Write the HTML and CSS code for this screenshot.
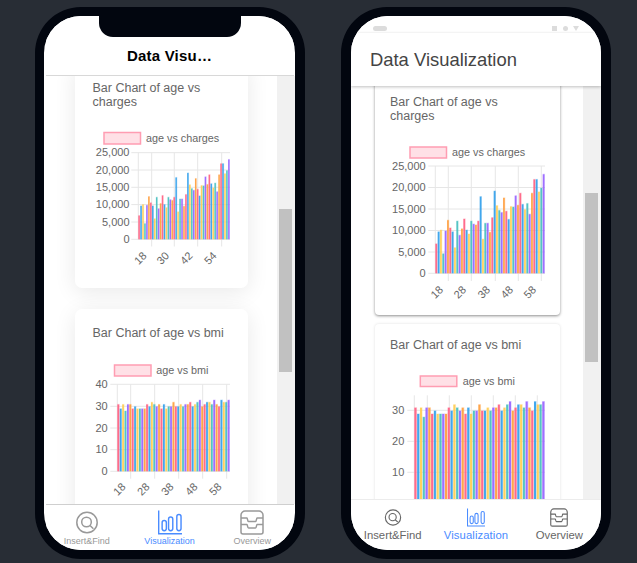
FILE: index.html
```html
<!DOCTYPE html>
<html lang="en">
<head>
<meta charset="utf-8">
<title>Data Visualization</title>
<link rel="stylesheet" href="styles.css">
</head>
<body>
<svg class="defs" width="0" height="0" aria-hidden="true">
  <symbol id="i-find" viewBox="0 0 24 24">
    <circle cx="12" cy="12" r="10.2"/>
    <circle cx="11.5" cy="11.5" r="4.8"/>
    <path d="M15 15l3.4 3.2"/>
  </symbol>
  <symbol id="i-bars" viewBox="0 0 25 25">
    <path d="M.7 0v24.3H25"/>
    <rect x="4.3" y="10.5" width="4.4" height="10.5" rx="2.2"/>
    <rect x="11" y="6.8" width="4.4" height="14.2" rx="2.2"/>
    <rect x="19.6" y="4.2" width="4.4" height="16.8" rx="2.2"/>
  </symbol>
  <symbol id="i-box" viewBox="0 0 24 25">
    <path d="M5 1h14c2 0 4 2 4 4v17c0 1.2-.8 2-2 2H3c-1.2 0-2-.8-2-2V5c0-2 2-4 4-4z"/>
    <path d="M1 8h6c.5 0 .5 3.500 1.500 3.500h7c1 0 1-3.500 1.500-3.500h6"/>
    <path d="M1 14.500h6c.5 0 .5 3.500 1.500 3.500h7c1 0 1-3.500 1.500-3.500h6"/>
  </symbol>
</svg>

<section class="phone phone-ios">
  <div class="screen">
    <div class="notch"></div>
    <header class="bar"><h1 class="bar-title">Data Visualization</h1></header>
    <div class="body">
      <div class="list">
        <article class="card">
          <h2 class="card-title">Bar Chart of age vs charges</h2>
          <svg class="chart chart-a" data-chart="ios-charges"></svg>
        </article>
        <article class="card">
          <h2 class="card-title">Bar Chart of age vs bmi</h2>
          <svg class="chart chart-b" data-chart="ios-bmi"></svg>
        </article>
      </div>
      <div class="track"><div class="thumb"></div></div>
    </div>
    <nav class="tabs">
      <a class="tab"><svg class="icon icon-find"><use href="#i-find"/></svg><span>Insert&amp;Find</span></a>
      <a class="tab is-active"><svg class="icon icon-bars"><use href="#i-bars"/></svg><span>Visualization</span></a>
      <a class="tab"><svg class="icon icon-box"><use href="#i-box"/></svg><span>Overview</span></a>
    </nav>
  </div>
</section>

<section class="phone phone-md">
  <div class="screen">
    <div class="status">
      <span class="status-pill"></span>
      <span class="status-icons"><i class="st-square"></i><i class="st-dot"></i><i class="st-tri"></i></span>
    </div>
    <header class="bar"><h1 class="bar-title">Data Visualization</h1></header>
    <div class="body">
      <div class="list">
        <article class="card">
          <h2 class="card-title">Bar Chart of age vs charges</h2>
          <svg class="chart chart-a" data-chart="md-charges"></svg>
        </article>
        <article class="card">
          <h2 class="card-title">Bar Chart of age vs bmi</h2>
          <svg class="chart chart-b" data-chart="md-bmi"></svg>
        </article>
      </div>
      <div class="track"><div class="thumb"></div></div>
    </div>
    <nav class="tabs">
      <a class="tab"><svg class="icon icon-find"><use href="#i-find"/></svg><span>Insert&amp;Find</span></a>
      <a class="tab is-active"><svg class="icon icon-bars"><use href="#i-bars"/></svg><span>Visualization</span></a>
      <a class="tab"><svg class="icon icon-box"><use href="#i-box"/></svg><span>Overview</span></a>
    </nav>
  </div>
</section>
<script src="charts.js"></script>
</body>
</html>
```
FILE: styles.css
```css
* { box-sizing: border-box; }
html, body { margin: 0; height: 100%; }
body {
  background: #282d35;
  display: flex;
  align-items: flex-start;
  gap: 36px;
  padding: 7px 0 0 35px;
  font-family: "Liberation Sans", Arial, sans-serif;
  overflow: hidden;
}
.defs { position: absolute; }

.phone {
  width: 270px;
  height: 552px;
  flex: none;
  border: 9px solid #02060f;
  border-radius: 46px;
  background: #02060f;
}
.phone-ios { border-width: 9px 10px 9px 9.500px; }
.phone-md { border-width: 9px 10px; }
.screen {
  position: relative;
  height: 100%;
  display: flex;
  flex-direction: column;
  background: #fff;
  border-radius: 37px;
  overflow: hidden;
}
.notch {
  position: absolute;
  z-index: 3;
  top: 0;
  left: 54.500px;
  width: 142px;
  height: 21px;
  background: #02060f;
  border-radius: 0 0 14px 14px;
}

.bar { flex: none; background: #fff; position: relative; z-index: 2; }
.bar-title { margin: 0; }
.phone-ios .bar {
  height: 60px;
  padding-top: 31px;
  margin: 0 1.500px;
  border-bottom: 1px solid #d8d8d8;
  display: flex;
  justify-content: center;
}
.phone-ios .bar-title {
  width: 90px;
  margin-left: 5px;
  font-size: 15px;
  line-height: 18px;
  font-weight: 700;
  color: #000;
  letter-spacing: .2px;
  white-space: nowrap;
  overflow: hidden;
  text-overflow: ellipsis;
}
.status {
  flex: none;
  height: 17px;
  padding: 10px 22px 0 22px;
  display: flex;
  justify-content: space-between;
  align-items: flex-start;
  background: #fff;
}
.status-pill { width: 14px; height: 5px; border-radius: 3px; background: #dcdcdc; }
.status-icons { display: flex; gap: 5.500px; align-items: flex-start; }
.st-square { width: 5px; height: 5px; background: #dcdcdc; }
.st-dot { width: 5px; height: 5px; border-radius: 50%; background: #dcdcdc; }
.st-tri { width: 0; height: 0; border: 3px solid transparent; border-top: 5px solid #dcdcdc; border-bottom: 0; }
.phone-md .bar {
  height: 53px;
  padding: 16px 0 0 19px;
  box-shadow: 0 1px 3px rgba(0, 0, 0, .25);
}
.phone-md .bar-title {
  font-size: 18.400px;
  line-height: 22px;
  font-weight: 400;
  color: #444;
}

.body { flex: 1; min-height: 0; display: flex; }
.list { flex: 1; min-width: 0; overflow: hidden; display: flex; flex-direction: column; }
.track { flex: none; width: 18px; background: #f1f1f1; }
.thumb { width: 13px; background: #c1c1c1; }

.phone-ios .body { padding-left: 1.500px; padding-right: 0; }
.phone-ios .list { padding: 0 29px; margin-top: -12px; gap: 21px; }
.phone-ios .thumb { margin: 133px 0 0 2px; height: 163px; }
.phone-ios .card { border-radius: 7px; box-shadow: 0 4px 22px rgba(0, 0, 0, .09); padding-top: 17px; }
.phone-md .list { padding: 0 23px 0 24px; margin-top: -6px; gap: 9px; }
.phone-md .thumb { margin: 107px 0 0 2px; height: 169px; }
.phone-md .card { border-radius: 4px; padding-top: 15px; }
.phone-md .card:first-child { box-shadow: 0 1px 3px rgba(0, 0, 0, .45); }
.phone-md .card:last-child { padding-top: 14px; box-shadow: 0 0 3px rgba(0, 0, 0, .13); }

.card { flex: none; background: #fff; }
.card-title {
  margin: 0;
  padding: 0 20px 0 18px;
  font-size: 12.500px;
  line-height: 14px;
  font-weight: 400;
  color: #666;
}
.phone-md .card-title { padding: 0 30px 0 15px; }
.chart { display: block; width: 100%; }
.phone-ios .chart-a { height: 179px; }
.phone-ios .chart-b { height: 190px; }
.phone-md .chart-a { height: 192px; }
.phone-md .chart-b { height: 190px; }
.chart text { font-family: "Liberation Sans", Arial, sans-serif; font-size: 11px; fill: #666; }
.chart .legend-text { font-size: 10.800px; }
.grid { stroke: #e6e6e6; stroke-width: 1; fill: none; }
.legend-box { fill: #ffe0e6; stroke: #ff9db2; stroke-width: 1.500; }

.tabs {
  flex: none;
  display: flex;
  background: #fff;
  position: relative;
  z-index: 2;
}
.tab {
  flex: 1;
  display: flex;
  flex-direction: column;
  align-items: center;
  color: #999;
}
.tab.is-active { color: #4a8cff; }
.icon { display: block; fill: none; stroke: currentColor; stroke-width: 1.500; }
.phone-ios .tabs { height: 46px; margin: 0 1.500px; border-top: 1px solid #cfcfcf; }
.phone-ios .tab { font-size: 9px; line-height: 11px; }
.phone-ios .icon { width: 24px; height: 25px; margin-top: 5px; margin-bottom: 1px; }
.phone-md .tabs { height: 51px; border-top: 1px solid #ececec; }
.phone-md .tab { font-size: 11.300px; line-height: 14px; color: #666; }
.phone-md .tab.is-active { color: #4a8cff; letter-spacing: .1px; }
.phone-md .icon { width: 18px; height: 19px; margin-top: 8px; margin-bottom: 1px; }
```
FILE: charts.js
```js
var CHARGES = [7000,9800,10200,4700,10000,12500,10700,9800,6100,12300,9000,10500,12800,10200,9300,12300,11600,11400,12300,18000,8100,11800,11800,9700,13100,19300,15900,14800,14300,17700,14600,12700,15700,15600,18200,16000,18800,16200,15000,16400,13900,18800,22000,22000,19100,20000,23200];
var BMI = [31,29,31,28,31,31,29,30,29,29,29,29,31,30,32,31,30,31,29,31,29,30,30,32,30,30,31,30,31,31,32,30,31,32,33,30,31,32,32,31,33,31,30,33,32,32,33];
var COLORS = ['255,99,132','54,162,235','255,206,86','75,192,192','153,102,255','255,159,64'];

/* All positions below are page coordinates; ox/oy is the svg's own origin. */
var CHARTS = {
  'ios-charges': {
    ox: 75, oy: 109, data: CHARGES, label: 'age vs charges',
    box: [104, 132.500, 36.500, 11.500], legendX: 146, legendY: 141.500,
    left: 138.300, right: 230, base: 239.300, tickBottom: 246.500, labelRight: 129.500,
    yTicks: [[25000, '25,000', 152.700], [20000, '20,000', 170], [15000, '15,000', 187.300], [10000, '10,000', 204.600], [5000, '5,000', 222], [0, '0', 239.300]],
    top: 152.700, max: 25000, gridTop: 152.700,
    xTicks: [[151.700, '18'], [174.300, '30'], [197.700, '42'], [221.700, '54']], labelY: 258
  },
  'ios-bmi': {
    ox: 75, oy: 340, data: BMI, label: 'age vs bmi',
    box: [114.500, 365, 36.500, 11], legendX: 156.300, legendY: 374,
    left: 117.300, right: 230, base: 471.300, tickBottom: 478.700, labelRight: 107.700,
    yTicks: [[40, '40', 384.300], [30, '30', 406.300], [20, '20', 428], [10, '10', 449.700], [0, '0', 471.300]],
    top: 384.300, max: 40, gridTop: 384.300,
    xTicks: [[130.700, '18'], [154.700, '28'], [178.700, '38'], [202.700, '48'], [226.700, '58']], labelY: 489
  },
  'md-charges': {
    ox: 375, oy: 123, data: CHARGES, label: 'age vs charges',
    box: [410, 147, 36.500, 11], legendX: 452, legendY: 155.500,
    left: 435.300, right: 545, base: 273.300, tickBottom: 281, labelRight: 425.700,
    yTicks: [[25000, '25,000', 166], [20000, '20,000', 187.500], [15000, '15,000', 209], [10000, '10,000', 230.500], [5000, '5,000', 252], [0, '0', 273.300]],
    top: 166, max: 25000, gridTop: 166,
    xTicks: [[448.300, '18'], [471.300, '28'], [495.300, '38'], [518.300, '48'], [541.300, '58']], labelY: 292
  },
  'md-bmi': {
    ox: 375, oy: 352, data: BMI, label: 'age vs bmi',
    box: [420.300, 376, 36.500, 10.500], legendX: 462.700, legendY: 384.500,
    left: 414.300, right: 545, base: 503.300, tickBottom: 511, labelRight: 404.300,
    yTicks: [[30, '30', 410.300], [20, '20', 441.300], [10, '10', 472.300], [0, '0', 503.300]],
    top: 410.300, max: 30, gridTop: 395.300,
    xTicks: [[427.300], [449.300], [471.300], [493.300], [515.300], [537.300]]
  }
};

var NS = 'http://www.w3.org/2000/svg';
function el(parent, name, attrs, text) {
  var node = document.createElementNS(NS, name);
  for (var k in attrs) node.setAttribute(k, attrs[k]);
  if (text !== undefined) node.textContent = text;
  parent.appendChild(node);
  return node;
}

document.querySelectorAll('svg[data-chart]').forEach(function (svg) {
  var c = CHARTS[svg.getAttribute('data-chart')];
  var g = el(svg, 'g', { transform: 'translate(' + (-c.ox) + ' ' + (-c.oy) + ')' });

  el(g, 'rect', { 'class': 'legend-box', x: c.box[0], y: c.box[1], width: c.box[2], height: c.box[3] });
  el(g, 'text', { 'class': 'legend-text', x: c.legendX, y: c.legendY }, c.label);

  var grid = 'M' + c.left + ' ' + c.gridTop + 'V' + c.base;
  c.yTicks.forEach(function (t) {
    grid += 'M' + (c.left - 7) + ' ' + t[2] + 'H' + c.right;
    el(g, 'text', { x: c.labelRight, y: t[2] + 3.600, 'text-anchor': 'end' }, t[1]);
  });
  c.xTicks.forEach(function (t) {
    grid += 'M' + t[0] + ' ' + c.gridTop + 'V' + c.tickBottom;
    if (t[1]) {
      el(g, 'text', {
        x: t[0] - 11.500, y: c.labelY + 4,
        'text-anchor': 'middle',
        transform: 'rotate(-45 ' + (t[0] - 11.500) + ' ' + c.labelY + ')'
      }, t[1]);
    }
  });
  el(g, 'path', { 'class': 'grid', d: grid });

  var slot = (c.right - c.left) / c.data.length;
  var scale = (c.base - c.top) / c.max;
  c.data.forEach(function (v, i) {
    var rgb = COLORS[i % COLORS.length];
    var x = c.left + i * slot;
    var h = v * scale;
    el(g, 'rect', { x: x, y: c.base - h, width: slot, height: h, fill: 'rgba(' + rgb + ',.3)' });
    el(g, 'rect', { x: x + slot * .05, y: c.base - h + .6, width: slot * .72, height: h - .6, fill: 'rgba(' + rgb + ',.92)' });
  });
});
```
